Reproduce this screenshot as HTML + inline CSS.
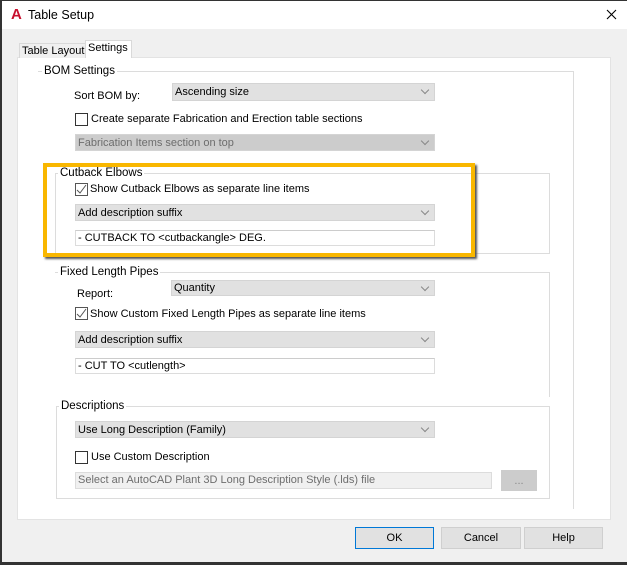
<!DOCTYPE html>
<html><head><style>
*{box-sizing:border-box;margin:0;padding:0}
body{width:627px;height:565px;position:relative;overflow:hidden;background:#f0f0f0;font-family:"Liberation Sans",sans-serif;font-size:11px;color:#000}
.a{position:absolute}
.t{position:absolute;white-space:nowrap;line-height:13px}
.cb{position:absolute;background:#e1e1e1;border:1px solid #d4d4d4;padding-left:2px;line-height:16px}
.cb:after{content:"";position:absolute;right:6px;top:3px;width:5px;height:5px;border-right:1px solid #888;border-bottom:1px solid #888;transform:rotate(45deg)}
.tb{position:absolute;background:#fff;border:1px solid #dcdcdc;border-top-color:#ccc;padding-left:2px;line-height:15px}
.gb{position:absolute;border:1px solid #dcdcdc}
.leg{position:absolute;background:#fff;padding:0 2px;line-height:13px;font-size:11.5px}
.chk{position:absolute;width:13px;height:13px;border:1px solid #333;background:#fff}
.btn{position:absolute;background:#e1e1e1;border:1px solid #cfcfcf;text-align:center;line-height:20px}
</style></head><body>
<div class="a" style="left:0;top:0;width:627px;height:29px;background:#fff;border-top:1px solid #333"></div>
<div class="a" style="left:0;top:0;width:2px;height:565px;background:#333"></div>
<div class="a" style="left:0;top:562px;width:627px;height:3px;background:#333"></div>
<div class="t" style="left:11px;top:7px;color:#c8102e;font-weight:bold;font-size:15px;line-height:15px">A</div>
<div class="t" style="left:28px;top:8px;font-size:12.5px;line-height:14px">Table Setup</div>
<svg class="a" style="left:606px;top:9px" width="11" height="11"><path d="M1 1L10 10M10 1L1 10" stroke="#000" stroke-width="1.1"/></svg>
<div class="a" style="left:17px;top:57px;width:594px;height:463px;background:#fff;border:1px solid #e3e3e3"></div>
<div class="a" style="left:19px;top:43px;width:67px;height:15px;background:#f0f0f0;border:1px solid #d9d9d9;border-bottom:none"></div>
<div class="t" style="left:22px;top:45px">Table Layout</div>
<div class="a" style="left:85px;top:40px;width:47px;height:18px;background:#fff;border:1px solid #d9d9d9;border-bottom:none"></div>
<div class="t" style="left:88px;top:42px">Settings</div>

<div class="gb" style="left:38px;top:71px;width:536px;height:438px;border-bottom:none;border-left:none"></div>
<div class="leg" style="left:42px;top:65px">BOM Settings</div>
<div class="t" style="left:74px;top:90px">Sort BOM by:</div>
<div class="cb" style="left:172px;top:83px;width:263px;height:18px">Ascending size</div>
<div class="chk" style="left:75px;top:113px"></div>
<div class="t" style="left:91px;top:113px">Create separate Fabrication and Erection table sections</div>
<div class="cb" style="left:75px;top:134px;width:360px;height:17px;background:#ccc;color:#6d6d6d">Fabrication Items section on top</div>

<div class="gb" style="left:55px;top:173px;width:495px;height:81px"></div>
<div class="leg" style="left:58px;top:167px">Cutback Elbows</div>
<div class="chk" style="left:75px;top:183px;border-color:#555"></div>
<svg class="a" style="left:76px;top:184px" width="11" height="11"><path d="M1 6L4 9L10 1" stroke="#555" stroke-width="1" fill="none"/></svg>
<div class="t" style="left:90px;top:183px">Show Cutback Elbows as separate line items</div>
<div class="cb" style="left:75px;top:204px;width:360px;height:17px">Add description suffix</div>
<div class="tb" style="left:75px;top:230px;width:360px;height:16px">- CUTBACK TO &lt;cutbackangle&gt; DEG.</div>

<div class="a" style="left:43px;top:163px;width:432px;height:94px;border:4px solid #f9b700;box-shadow:2px 2px 2px #555"></div>

<div class="gb" style="left:55px;top:272px;width:495px;height:125px;border-bottom:none;border-left:none"></div>
<div class="leg" style="left:58px;top:266px">Fixed Length Pipes</div>
<div class="t" style="left:77px;top:288px">Report:</div>
<div class="cb" style="left:171px;top:280px;width:264px;height:16px;line-height:14px">Quantity</div>
<div class="chk" style="left:75px;top:307px;border-color:#555"></div>
<svg class="a" style="left:76px;top:308px" width="11" height="11"><path d="M1 6L4 9L10 1" stroke="#555" stroke-width="1" fill="none"/></svg>
<div class="t" style="left:90px;top:308px">Show Custom Fixed Length Pipes as separate line items</div>
<div class="cb" style="left:75px;top:331px;width:360px;height:17px">Add description suffix</div>
<div class="tb" style="left:75px;top:358px;width:360px;height:16px">- CUT TO &lt;cutlength&gt;</div>

<div class="gb" style="left:56px;top:406px;width:494px;height:93px"></div>
<div class="leg" style="left:59px;top:400px">Descriptions</div>
<div class="cb" style="left:75px;top:421px;width:360px;height:17px">Use Long Description (Family)</div>
<div class="chk" style="left:75px;top:451px"></div>
<div class="t" style="left:91px;top:451px">Use Custom Description</div>
<div class="a" style="left:75px;top:472px;width:417px;height:17px;background:#f0f0f0;border:1px solid #dcdcdc;color:#6d6d6d;padding-left:2px;line-height:15px;white-space:nowrap">Select an AutoCAD Plant 3D Long Description Style (.lds) file</div>
<div class="btn" style="left:501px;top:470px;width:36px;height:21px;background:#ccc;border-color:#ccc;color:#888">...</div>

<div class="btn" style="left:355px;top:527px;width:79px;height:22px;border-color:#0078d7">OK</div>
<div class="btn" style="left:441px;top:527px;width:80px;height:22px">Cancel</div>
<div class="btn" style="left:524px;top:527px;width:79px;height:22px">Help</div>
</body></html>
